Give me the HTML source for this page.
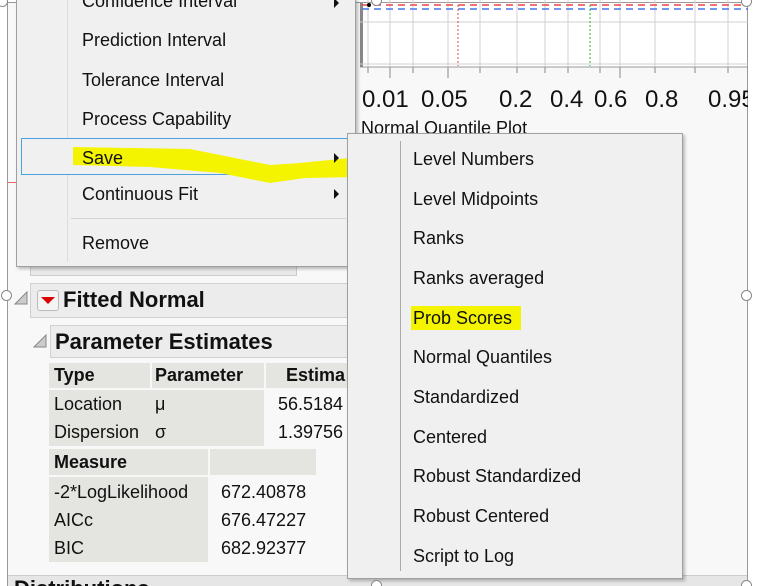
<!DOCTYPE html>
<html style="width:760px;height:586px;overflow:hidden"><head><meta charset="utf-8"><style>
*{margin:0;padding:0;box-sizing:border-box}
body{width:760px;height:586px;overflow:hidden;background:#fff;font-family:"Liberation Sans",Arial,sans-serif;position:relative;color:#111}
.a{position:absolute}
.frame{left:7px;top:2px;width:741px;height:590px;border:1px solid #999;background:#f8f8f8}
.h{position:absolute;width:11px;height:11px;border:1.5px solid #888;border-radius:50%;background:#fff}
.menu{background:#f0f0f0;border:1px solid #a0a0a0;box-shadow:2px 2px 3px rgba(0,0,0,.25)}
.mi{position:absolute;font-size:18px;white-space:nowrap;line-height:22px}
.arr{position:absolute;width:0;height:0;border-top:5px solid transparent;border-bottom:5px solid transparent;border-left:5px solid #111}
.cell{position:absolute;font-size:18px;line-height:24px;white-space:nowrap}
.g{background:#e4e4e0}
.b{font-weight:bold}
.lbl{position:absolute;font-size:24px;top:87px;line-height:26px}
</style></head><body>
<div class="a frame"></div>
<div class="a" style="left:8px;top:575px;width:739px;height:11px;background:#e6e6e6;border-top:1px solid #ccc"></div>
<div class="a b" style="left:14px;top:578px;font-size:22px;line-height:22px">Distributions</div>

<!-- plot area -->
<div class="a" style="left:360px;top:3px;width:387px;height:64px;background:#fff;border-left:3px solid #888"></div>
<svg class="a" style="left:360px;top:0" width="388" height="80">
<g stroke="#d0d0d0" stroke-width="1">
<line x1="0" y1="22" x2="388" y2="22"/><line x1="0" y1="64" x2="388" y2="64"/>
<line x1="8" y1="0" x2="8" y2="66"/><line x1="30" y1="0" x2="30" y2="66"/><line x1="53" y1="0" x2="53" y2="66"/><line x1="88" y1="0" x2="88" y2="66"/><line x1="120" y1="0" x2="120" y2="66"/><line x1="157" y1="0" x2="157" y2="66"/><line x1="185" y1="0" x2="185" y2="66"/><line x1="208" y1="0" x2="208" y2="66"/><line x1="240" y1="0" x2="240" y2="66"/><line x1="260" y1="0" x2="260" y2="66"/><line x1="295" y1="0" x2="295" y2="66"/><line x1="335" y1="0" x2="335" y2="66"/><line x1="368" y1="0" x2="368" y2="66"/>
</g>
<line x1="0" y1="67" x2="388" y2="67" stroke="#999"/>
<g stroke="#888"><line x1="8" y1="67" x2="8" y2="73"/><line x1="30" y1="67" x2="30" y2="78"/><line x1="53" y1="67" x2="53" y2="73"/><line x1="88" y1="67" x2="88" y2="78"/><line x1="120" y1="67" x2="120" y2="73"/><line x1="157" y1="67" x2="157" y2="73"/><line x1="185" y1="67" x2="185" y2="73"/><line x1="208" y1="67" x2="208" y2="73"/><line x1="240" y1="67" x2="240" y2="73"/><line x1="260" y1="67" x2="260" y2="78"/><line x1="295" y1="67" x2="295" y2="73"/><line x1="335" y1="67" x2="335" y2="73"/><line x1="368" y1="67" x2="368" y2="73"/></g>
<line x1="2" y1="5" x2="388" y2="5" stroke="#e44" stroke-width="1.5" stroke-dasharray="7,5"/>
<line x1="2" y1="9" x2="388" y2="9" stroke="#47e" stroke-width="1.5" stroke-dasharray="7,5"/>
<line x1="98" y1="5" x2="98" y2="66" stroke="#e44" stroke-dasharray="2,2"/>
<line x1="230" y1="5" x2="230" y2="66" stroke="#2b2" stroke-dasharray="2,2"/>
<circle cx="9" cy="5" r="2" fill="#000"/>
</svg>
<div class="lbl" style="left:362px">0.01</div>
<div class="lbl" style="left:421px">0.05</div>
<div class="lbl" style="left:499px">0.2</div>
<div class="lbl" style="left:550px">0.4</div>
<div class="lbl" style="left:594px">0.6</div>
<div class="lbl" style="left:645px">0.8</div>
<div class="lbl" style="left:708px">0.95</div>
<div class="a" style="left:748px;top:0;width:12px;height:586px;background:#fff"></div>
<div class="a" style="left:361px;top:118px;font-size:18px">Normal Quantile Plot</div>

<!-- left panel -->
<div class="a" style="left:8px;top:182px;width:8px;height:1px;background:#e66"></div>
<div class="a" style="left:30px;top:258px;width:267px;height:18px;background:#e8e8e8;border:1px solid #ccc"></div>
<div class="a" style="left:30px;top:283px;width:318px;height:35px;background:#ececec;border:1px solid #d0d0d0"></div>
<svg class="a" style="left:14px;top:290px" width="16" height="16"><path d="M13 2 L13 14 L1 14 Z" fill="#ccc" stroke="#888"/></svg>
<div class="a" style="left:37px;top:290px;width:22px;height:21px;border:1px solid #bbb;border-radius:3px;background:#f4f4f4"></div>
<svg class="a" style="left:41px;top:297px" width="14" height="8"><path d="M0 0 L14 0 L7 7 Z" fill="#d00"/></svg>
<div class="a b" style="left:63px;top:285px;font-size:22px;line-height:30px">Fitted Normal</div>
<div class="a" style="left:50px;top:325px;width:298px;height:33px;background:#ececec;border:1px solid #d0d0d0"></div>
<svg class="a" style="left:33px;top:333px" width="16" height="16"><path d="M13 2 L13 14 L1 14 Z" fill="#ccc" stroke="#888"/></svg>
<div class="a b" style="left:55px;top:327px;font-size:22px;line-height:30px">Parameter Estimates</div>

<div class="a g" style="left:49px;top:363px;width:101px;height:25px"></div>
<div class="a g" style="left:152px;top:363px;width:112px;height:25px"></div>
<div class="a g" style="left:266px;top:363px;width:82px;height:25px"></div>
<div class="a g" style="left:49px;top:390px;width:215px;height:56px"></div>
<div class="cell b" style="left:54px;top:363px">Type</div>
<div class="cell b" style="left:155px;top:363px">Parameter</div>
<div class="cell b" style="left:286px;top:363px">Estima</div>
<div class="cell" style="left:54px;top:392px">Location</div>
<div class="cell" style="left:155px;top:392px">μ</div>
<div class="cell" style="left:278px;top:392px">56.5184</div>
<div class="cell" style="left:54px;top:420px">Dispersion</div>
<div class="cell" style="left:155px;top:420px">σ</div>
<div class="cell" style="left:278px;top:420px">1.39756</div>
<div class="a g" style="left:49px;top:449px;width:159px;height:26px"></div>
<div class="a g" style="left:210px;top:449px;width:106px;height:26px"></div>
<div class="a g" style="left:49px;top:477px;width:159px;height:85px"></div>
<div class="cell b" style="left:54px;top:450px">Measure</div>
<div class="cell" style="left:54px;top:480px">-2*LogLikelihood</div>
<div class="cell" style="left:221px;top:480px">672.40878</div>
<div class="cell" style="left:54px;top:508px">AICc</div>
<div class="cell" style="left:221px;top:508px">676.47227</div>
<div class="cell" style="left:54px;top:536px">BIC</div>
<div class="cell" style="left:221px;top:536px">682.92377</div>

<!-- menu 1 -->
<div class="a menu" style="left:16px;top:-2px;width:340px;height:269px"></div>
<div class="a" style="left:67px;top:0;width:1px;height:262px;background:#ddd"></div>
<div class="a" style="left:71px;top:218px;width:275px;height:1px;background:#d4d4d4"></div>
<div class="mi" style="left:82px;top:-10px">Confidence Interval</div>
<div class="arr" style="left:334px;top:-2px"></div>
<div class="mi" style="left:82px;top:29px">Prediction Interval</div>
<div class="mi" style="left:82px;top:69px">Tolerance Interval</div>
<div class="mi" style="left:82px;top:108px">Process Capability</div>
<div class="a" style="left:21px;top:138px;width:334px;height:37px;border:1px solid #4aa3df;background:#f0f0f0"></div>
<svg class="a" style="left:70px;top:145px" width="290" height="46"><path d="M3 2 L120 4 L200 20 L230 18 L290 12 L290 32 L235 33 L200 38 L150 28 L80 22 L3 20 Z" fill="#f4f400"/></svg>
<div class="mi" style="left:82px;top:147px">Save</div>
<div class="arr" style="left:334px;top:153px"></div>
<div class="mi" style="left:82px;top:183px">Continuous Fit</div>
<div class="arr" style="left:334px;top:189px"></div>
<div class="mi" style="left:82px;top:232px">Remove</div>

<!-- menu 2 -->
<div class="a menu" style="left:347px;top:133px;width:336px;height:446px"></div>
<div class="a" style="left:400px;top:141px;width:1px;height:430px;background:#aaa"></div>
<div class="a" style="left:411px;top:306px;width:110px;height:24px;background:#f4f400"></div>
<div class="mi" style="left:413px;top:148px">Level Numbers</div>
<div class="mi" style="left:413px;top:188px">Level Midpoints</div>
<div class="mi" style="left:413px;top:227px">Ranks</div>
<div class="mi" style="left:413px;top:267px">Ranks averaged</div>
<div class="mi" style="left:413px;top:307px">Prob Scores</div>
<div class="mi" style="left:413px;top:346px">Normal Quantiles</div>
<div class="mi" style="left:413px;top:386px">Standardized</div>
<div class="mi" style="left:413px;top:426px">Centered</div>
<div class="mi" style="left:413px;top:465px">Robust Standardized</div>
<div class="mi" style="left:413px;top:505px">Robust Centered</div>
<div class="mi" style="left:413px;top:545px">Script to Log</div>

<div class="h" style="left:-3px;top:-4px"></div>
<div class="h" style="left:371px;top:-5px"></div>
<div class="h" style="left:741px;top:-4px"></div>
<div class="h" style="left:1px;top:290px"></div>
<div class="h" style="left:741px;top:290px"></div>
<div class="h" style="left:371px;top:580px"></div>
<div class="h" style="left:741px;top:580px"></div>
</body></html>
